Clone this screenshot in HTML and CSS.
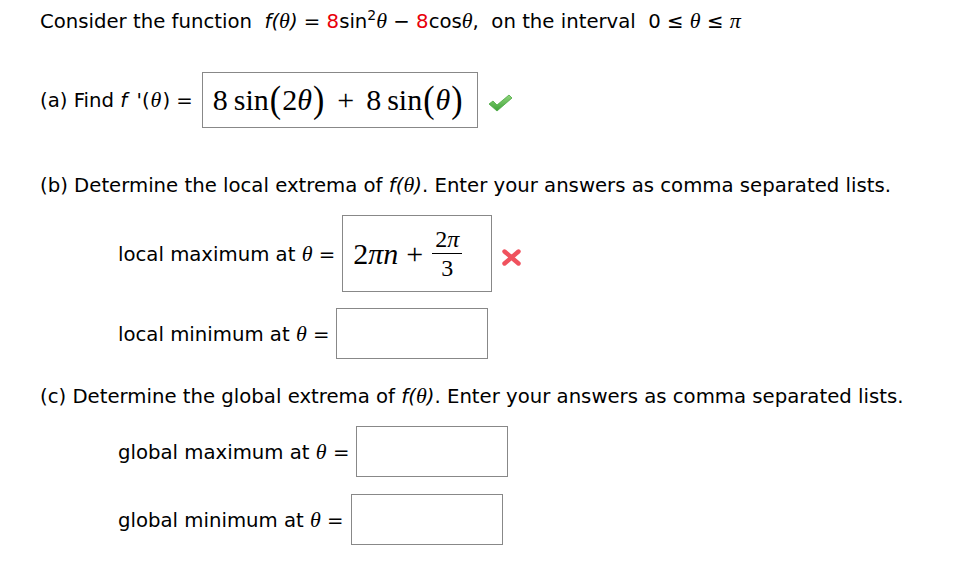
FILE: index.html
```html
<!DOCTYPE html>
<html>
<head>
<meta charset="utf-8">
<link rel="stylesheet" href="styles.css">
</head>
<body>
<div class="page">
  <p class="intro">Consider the function &nbsp;<span class="fn">f(<span class="th">θ</span>)</span> = <span class="red">8</span>sin<sup>2</sup><span class="th">θ</span> − <span class="red">8</span>cos<span class="th">θ</span>, &nbsp;on the interval &nbsp;0 ≤ <span class="th">θ</span> ≤ <span class="th">π</span></p>

  <div class="row row-a">
    <span class="label">(a) Find <span class="fi">f</span> '(<span class="th">θ</span>) =</span>
    <div class="box box-a"><span class="math">8&thinsp;sin<span class="paren">(</span>2<i>θ</i><span class="paren">)</span><span class="op">+</span>8&thinsp;sin<span class="paren">(</span><i>θ</i><span class="paren">)</span></span></div>
    <svg class="icon check" width="26" height="18" viewBox="0 0 26 18"><defs><linearGradient id="g" x1="0" y1="0" x2="0" y2="1"><stop offset="0" stop-color="#8fd47a"/><stop offset="1" stop-color="#3fa33a"/></linearGradient></defs><path d="M2 10 L6 7 L10 11 L22 1 L25 4 L10 17 Z" fill="url(#g)" stroke="#4aa842" stroke-width="0.8" stroke-linejoin="round"/></svg>
  </div>

  <p class="heading head-b">(b) Determine the local extrema of <span class="fn">f(<span class="th">θ</span>)</span>. Enter your answers as comma separated lists.</p>

  <div class="row row-lmax">
    <span class="label">local maximum at <span class="th">θ</span> =</span>
    <div class="box box-lmax"><span class="math">2<i class="pi">π</i><i>n</i><span class="op">+</span><span class="frac"><span class="num">2<i class="pi">π</i></span><span class="den">3</span></span></span></div>
    <svg class="icon cross" width="21" height="19" viewBox="0 0 21 19"><path d="M3.5 3.5 L17.5 15.5 M17.5 3.5 L3.5 15.5" stroke="#f0525e" stroke-width="4.4" stroke-linecap="round"/></svg>
  </div>

  <div class="row row-lmin">
    <span class="label">local minimum at <span class="th">θ</span> =</span>
    <div class="box box-small"></div>
  </div>

  <p class="heading head-c">(c) Determine the global extrema of <span class="fn">f(<span class="th">θ</span>)</span>. Enter your answers as comma separated lists.</p>

  <div class="row row-gmax">
    <span class="label">global maximum at <span class="th">θ</span> =</span>
    <div class="box box-small"></div>
  </div>

  <div class="row row-gmin">
    <span class="label">global minimum at <span class="th">θ</span> =</span>
    <div class="box box-small"></div>
  </div>
</div>
</body>
</html>
```

FILE: styles.css
```css
html, body {
  margin: 0;
  padding: 0;
  background: #fff;
}
.page {
  padding: 0 0 0 40px;
  font-family: "DejaVu Sans", Verdana, sans-serif;
  font-size: 19.7px;
  color: #000;
}
p {
  margin: 0;
}
.intro {
  padding-top: 9px;
  line-height: 24px;
}
.intro sup {
  font-size: 14px;
  line-height: 0;
  vertical-align: 8px;
}
.red {
  color: #e8000b;
}
.th {
  font-family: "Liberation Serif", "DejaVu Serif", serif;
  font-style: italic;
  font-size: 22px;
}
.fn {
  font-style: italic;
}
.fi {
  font-style: italic;
  margin-right: 3px;
}
.row {
  display: flex;
  align-items: center;
}
.label {
  white-space: nowrap;
}
.box {
  box-sizing: border-box;
  border: 1px solid #888;
  background: #fff;
  display: flex;
  align-items: center;
}
.math {
  font-family: "Liberation Serif", "DejaVu Serif", serif;
  white-space: nowrap;
  display: inline-flex;
  align-items: center;
}
.math i {
  font-style: italic;
}
.op {
  margin: 0 12px;
}
.row-a {
  margin-top: 38px;
}
.row-a .label {
  margin-right: 9px;
}
.row-a .label .th {
  margin: 0 1px;
}
.box-a {
  width: 276px;
  height: 56px;
  padding-left: 10px;
  font-size: 30px;
}
.paren {
  font-size: 34px;
  display: inline-block;
  transform: scaleY(1.1);
  margin: 0 1px;
}
.check {
  margin-left: 9px;
  margin-top: 6px;
}
.heading {
  line-height: 24px;
}
.head-b {
  margin-top: 45px;
}
.row-lmax {
  margin-top: 17px;
  padding-left: 78px;
}
.row-lmax .label {
  margin-right: 7px;
}
.box-lmax {
  width: 150px;
  height: 77px;
  padding-left: 10px;
  font-size: 30px;
}
.box-lmax .op {
  margin: 0 9px 0 8px;
}
.frac {
  display: inline-flex;
  flex-direction: column;
  align-items: center;
  font-size: 24px;
  line-height: 25px;
}
.frac .num {
  border-bottom: 1px solid #000;
  padding: 0 3px 1px;
}
.frac .den {
  padding-top: 2px;
}
.cross {
  margin-left: 9px;
  margin-top: 8px;
}
.row-lmin {
  margin-top: 16px;
  padding-left: 78px;
}
.row-lmin .label,
.row-gmax .label,
.row-gmin .label {
  margin-right: 7px;
}
.box-small {
  width: 152px;
  height: 51px;
}
.head-c {
  margin-top: 25px;
}
.row-gmax {
  margin-top: 17px;
  padding-left: 78px;
}
.row-gmin {
  margin-top: 17px;
  padding-left: 78px;
}
```
